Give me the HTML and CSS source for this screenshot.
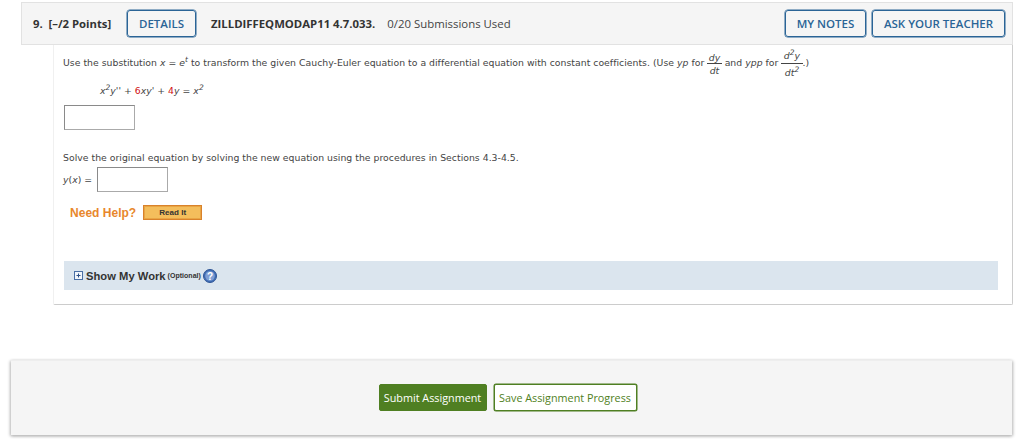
FILE: index.html
```html
<!doctype html>
<html>
	<head>
		<meta http-equiv="Content-Type" content="text/html; charset=utf-8" />
		<title>Question 9</title>
		<link rel="stylesheet" href="styles.css">
	</head>
	<body>
		<header class="q_header">
			<b class="q_points">9.&nbsp; [–/2 Points]</b>
			<a class="blue_btn details_btn">DETAILS</a>
			<b class="q_code">ZILLDIFFEQMODAP11 4.7.033.</b>
			<span class="q_subs">0/20 Submissions Used</span>
			<a class="blue_btn notes_btn">MY NOTES</a>
			<a class="blue_btn teacher_btn">ASK YOUR TEACHER</a>
		</header>
		<section class="q_body">
			<div class="line_first">Use the substitution <i>x</i> = <i>e<sup>t</sup></i> to transform the given Cauchy-Euler equation to a differential equation with constant coefficients. (Use <i>yp</i> for <span class="frac"><i class="num">dy</i><i class="den">dt</i></span> and <i>ypp</i> for <span class="frac frac_wide"><i class="num">d<sup>2</sup>y</i><i class="den">dt<sup>2</sup></i></span>.)</div>
			<div class="equation"><i>x<sup>2</sup>y''</i> + <span class="red">6</span><i>xy'</i> + <span class="red">4</span><i>y</i> = <i>x<sup>2</sup></i></div>
			<div class="answer_box"></div>
			<div class="line_solve">Solve the original equation by solving the new equation using the procedures in Sections 4.3-4.5.</div>
			<div class="line_answer"><span><i>y</i>(<i>x</i>) =</span><div class="answer_box"></div></div>
			<div class="help_row">
				<span class="need_help">Need Help?</span>
				<a class="read_it"><span>Read It</span></a>
			</div>
			<div class="work_bar">
				<svg class="plus_icon" width="9" height="9" viewBox="0 0 9 9">
					<rect x="0.5" y="0.5" width="8" height="8" fill="#f2f6fb" stroke="#4a6fa5"/>
					<path d="M2.5 4.5h4M4.5 2.5v4" stroke="#2c4f86" fill="none"/>
				</svg>
				<b class="work_title">Show My Work</b>
				<b class="work_opt">(Optional)</b>
				<svg class="help_icon" width="14" height="14" viewBox="0 0 14 14">
					<circle cx="7" cy="7" r="6.5" fill="#3f6db5" stroke="#2f5596"/>
					<circle cx="7" cy="7" r="4.8" fill="#7f9fd4"/>
					<text x="7" y="10.5" text-anchor="middle" class="help_q">?</text>
				</svg>
			</div>
		</section>
		<footer class="bottom_panel">
			<a class="green_btn submit_btn">Submit Assignment</a>
			<a class="green_btn outline_btn">Save Assignment Progress</a>
		</footer>
	</body>
</html>
```

FILE: styles.css
```css
body {
	margin : 0;
	width : 1024px;
	height : 444px;
	overflow : hidden;
	background-color : #fff;
	font-family : "DejaVu Sans", sans-serif;
	color : #444;
}
.q_header {
	display : flex;
	align-items : center;
	box-sizing : border-box;
	margin : 2px 0 0 21px;
	width : 992px;
	height : 43px;
	padding : 0 7px 0 11px;
	background-color : #f5f5f5;
	border : 1px solid #e2e2e2;
	font-family : "Open Sans", sans-serif;
	font-size : 11.5px;
	color : #333;
}
.q_points {
	font-size : 11.3px;
	width : 94px;
	white-space : nowrap;
}
.blue_btn {
	box-sizing : border-box;
	height : 27px;
	line-height : 25px;
	text-align : center;
	border : 1px solid #2a6496;
	border-radius : 3px;
	box-shadow : 0 0 0 0.5px #2a6496;
	color : #2a6496;
	font-weight : 600;
	font-size : 11.5px;
	white-space : nowrap;
}
.details_btn {
	width : 69px;
}
.notes_btn {
	width : 81px;
	margin-left : auto;
}
.teacher_btn {
	width : 133px;
	margin-left : 6px;
}
.q_code {
	margin-left : 15px;
	font-weight : 700;
	font-size : 11.35px;
	white-space : nowrap;
}
.q_subs {
	margin-left : 12px;
	font-size : 11.4px;
	color : #444;
	white-space : nowrap;
}
.q_body {
	box-sizing : border-box;
	margin-left : 53px;
	width : 960px;
	height : 260px;
	padding : 0 14px 0 9px;
	border-left : 1px solid #f0f0f0;
	border-right : 1px solid #ccc;
	border-bottom : 1px solid #ccc;
	border-radius : 0 0 2px 2px;
	font-size : 9.3px;
	letter-spacing : 0.02px;
}
sup {
	font-size : 7.5px;
	line-height : 0;
}
.line_first {
	height : 36px;
	line-height : 36px;
	white-space : nowrap;
}
.frac {
	display : inline-block;
	vertical-align : middle;
	line-height : 11px;
	text-align : center;
}
.num {
	display : block;
	padding : 0 1.5px;
	border-bottom : 1px solid #444;
}
.den {
	display : block;
	padding : 1px 1.5px 0;
}
.frac_wide .num {
	padding : 0 2.5px 2px;
}
.frac_wide .den {
	padding-top : 3px;
}
.equation {
	margin : 0 0 0 37px;
	height : 17px;
	line-height : 20px;
}
.red {
	color : #d01010;
}
.answer_box {
	box-sizing : border-box;
	width : 71px;
	height : 25px;
	background-color : #fff;
	border : 1px solid #aaa;
	border-top-color : #8a8a8a;
	border-left-color : #8a8a8a;
}
.equation + .answer_box {
	margin : 7px 0 0 1px;
}
.line_solve {
	margin-top : 22px;
	line-height : 12px;
}
.line_answer {
	display : flex;
	align-items : center;
	gap : 5px;
	margin-top : 3px;
}
.help_row {
	display : flex;
	align-items : center;
	margin : 13px 0 0 7px;
}
.need_help {
	font-family : "Liberation Sans", sans-serif;
	font-size : 12px;
	font-weight : 700;
	color : #e8872c;
}
.read_it {
	display : block;
	box-sizing : border-box;
	width : 59px;
	height : 15px;
	margin-left : 7px;
	background-color : #f4be5c;
	border : 1px solid #d9822b;
	box-shadow : inset 0 0 0 1px #e9a544;
	text-align : center;
	font-family : "Liberation Sans", sans-serif;
	font-size : 8px;
	font-weight : 700;
	line-height : 13px;
	color : #333;
}
.work_bar {
	display : flex;
	align-items : center;
	height : 29px;
	margin : 41px 0 0 1px;
	padding-left : 10px;
	background-color : #dbe5ee;
	font-family : "Liberation Sans", sans-serif;
	color : #333;
}
.plus_icon {
	margin-right : 3px;
}
.work_title {
	font-size : 11.2px;
	white-space : nowrap;
}
.work_opt {
	margin-left : 2px;
	font-size : 7px;
	white-space : nowrap;
}
.help_icon {
	margin-left : 2px;
}
.help_q {
	font-family : "Liberation Sans", sans-serif;
	font-size : 10px;
	font-weight : 700;
	fill : #fff;
}
.bottom_panel {
	display : flex;
	justify-content : center;
	align-items : center;
	gap : 7px;
	box-sizing : border-box;
	margin : 55px 0 0 11px;
	width : 1001px;
	height : 75px;
	padding : 0 8px 1px 0;
	background-color : #f5f5f5;
	border-top : 1px solid #eee;
	box-shadow : -1px 1px 3px #bbb, 1px 1px 3px #bbb;
}
.green_btn {
	box-sizing : border-box;
	height : 27px;
	line-height : 26px;
	background-color : #4f7f22;
	border : 1px solid #4f7f22;
	border-radius : 2px;
	color : #fff;
	font-family : "Open Sans", sans-serif;
	font-size : 10.8px;
	text-align : center;
	white-space : nowrap;
}
.submit_btn {
	width : 108px;
}
.outline_btn {
	width : 143px;
	background-color : #fff;
	color : #4f7f22;
	box-shadow : 0 0 0 0.5px #4f7f22;
}
```
